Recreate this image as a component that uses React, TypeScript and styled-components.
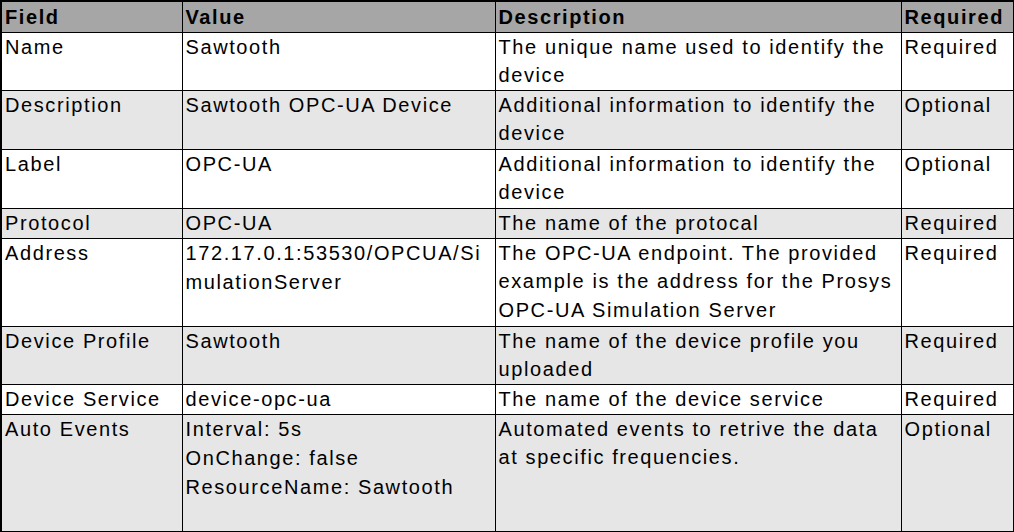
import React from "react";
import styled, { createGlobalStyle } from "styled-components";

const GlobalStyle = createGlobalStyle`
  html, body {
    margin: 0;
    padding: 0;
    background: #ffffff;
  }
`;

const Table = styled.table`
  width: 1013px;
  height: 531px;
  border-collapse: collapse;
  table-layout: fixed;
  border: 2px solid #000;
  font-family: "Liberation Sans", Arial, sans-serif;
  font-size: 20px;
  letter-spacing: 1.6px;
  line-height: 28.5px;
  color: #000;
`;

const HeadCell = styled.th`
  background: #a6a6a6;
  font-weight: bold;
  text-align: left;
  vertical-align: top;
  padding: 1px 3px 0;
  height: 28px;
  border: 1px solid #000;
  white-space: nowrap;
  overflow: hidden;
`;

const Row = styled.tr<{ $shaded?: boolean; $h: number }>`
  background: ${(p) => (p.$shaded ? "#e6e6e6" : "#ffffff")};
  height: ${(p) => p.$h}px;
`;

const Cell = styled.td`
  vertical-align: top;
  padding: 0 3px;
  border: 1px solid #000;
  overflow-wrap: anywhere;
`;

const Line = styled.div`
  line-height: 29px;
`;

type Item = {
  field: string;
  value: string[];
  description: string;
  required: string;
  h: number;
};

const rows: Item[] = [
  {
    field: "Name",
    value: ["Sawtooth"],
    description: "The unique name used to identify the device",
    required: "Required",
    h: 58,
  },
  {
    field: "Description",
    value: ["Sawtooth OPC-UA Device"],
    description: "Additional information to identify the device",
    required: "Optional",
    h: 59,
  },
  {
    field: "Label",
    value: ["OPC-UA"],
    description: "Additional information to identify the device",
    required: "Optional",
    h: 59,
  },
  {
    field: "Protocol",
    value: ["OPC-UA"],
    description: "The name of the protocal",
    required: "Required",
    h: 29,
  },
  {
    field: "Address",
    value: ["172.17.0.1:53530/OPCUA/SimulationServer"],
    description:
      "The OPC-UA endpoint. The provided example is the address for the Prosys OPC-UA Simulation Server",
    required: "Required",
    h: 88,
  },
  {
    field: "Device Profile",
    value: ["Sawtooth"],
    description: "The name of the device profile you uploaded",
    required: "Required",
    h: 58,
  },
  {
    field: "Device Service",
    value: ["device-opc-ua"],
    description: "The name of the device service",
    required: "Required",
    h: 28,
  },
  {
    field: "Auto Events",
    value: ["Interval: 5s", "OnChange: false", "ResourceName: Sawtooth"],
    description: "Automated events to retrive the data at specific frequencies.",
    required: "Optional",
    h: 118,
  },
];

export default function App() {
  return (
    <>
      <GlobalStyle />
      <Table>
        <colgroup>
          <col style={{ width: 181 }} />
          <col style={{ width: 313 }} />
          <col style={{ width: 406 }} />
          <col style={{ width: 113 }} />
        </colgroup>
        <thead>
          <tr>
            <HeadCell>Field</HeadCell>
            <HeadCell>Value</HeadCell>
            <HeadCell>Description</HeadCell>
            <HeadCell>Required</HeadCell>
          </tr>
        </thead>
        <tbody>
          {rows.map((r, i) => (
            <Row key={r.field} $shaded={i % 2 === 1} $h={r.h}>
              <Cell>{r.field}</Cell>
              <Cell>
                {r.value.map((v) => (
                  <Line key={v}>{v}</Line>
                ))}
              </Cell>
              <Cell>{r.description}</Cell>
              <Cell>{r.required}</Cell>
            </Row>
          ))}
        </tbody>
      </Table>
    </>
  );
}
